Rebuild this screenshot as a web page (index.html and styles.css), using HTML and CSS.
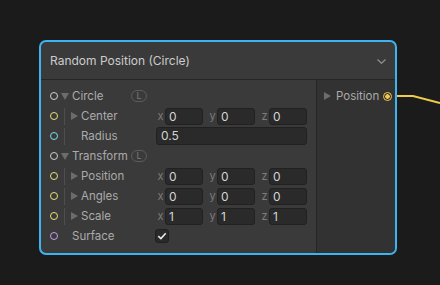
FILE: index.html
```html
<!DOCTYPE html>
<html lang="en">
<head>
  <meta charset="UTF-8">
  <title>Random Position (Circle)</title>
  <link rel="stylesheet" href="styles.css">
</head>
<body>
  <div class="canvas">
    <div class="node">
      <div class="node-header">
        <span class="title">Random Position (Circle)</span>
        <svg class="chevron" width="9" height="5" viewBox="0 0 9 5"><path d="M0.5 0.5 L4.5 4.3 L8.5 0.5" fill="none" stroke="#8a8a8a" stroke-width="1.3"/></svg>
      </div>
      <div class="node-body">
        <div class="inputs">
          <div class="row">
            <span class="port port-white"></span>
            <div class="name">
              <span class="tri-down"></span>
              <span class="label">Circle</span>
              <span class="badge">L</span>
            </div>
          </div>
          <div class="row">
            <span class="port port-yellow"></span>
            <div class="name">
              <span class="guide"></span>
              <span class="tri-right"></span>
              <span class="label">Center</span>
            </div>
            <div class="vec">
              <div class="comp"><span class="axis">x</span><span class="box">0</span></div>
              <div class="comp"><span class="axis">y</span><span class="box">0</span></div>
              <div class="comp"><span class="axis">z</span><span class="box">0</span></div>
            </div>
          </div>
          <div class="row">
            <span class="port port-cyan"></span>
            <div class="name">
              <span class="guide"></span>
              <span class="tri-space"></span>
              <span class="label">Radius</span>
            </div>
            <span class="box box-wide">0.5</span>
          </div>
          <div class="row">
            <span class="port port-white"></span>
            <div class="name">
              <span class="tri-down"></span>
              <span class="label">Transform</span>
              <span class="badge">L</span>
            </div>
          </div>
          <div class="row">
            <span class="port port-yellow"></span>
            <div class="name">
              <span class="guide"></span>
              <span class="tri-right"></span>
              <span class="label">Position</span>
            </div>
            <div class="vec">
              <div class="comp"><span class="axis">x</span><span class="box">0</span></div>
              <div class="comp"><span class="axis">y</span><span class="box">0</span></div>
              <div class="comp"><span class="axis">z</span><span class="box">0</span></div>
            </div>
          </div>
          <div class="row">
            <span class="port port-yellow"></span>
            <div class="name">
              <span class="guide"></span>
              <span class="tri-right"></span>
              <span class="label">Angles</span>
            </div>
            <div class="vec">
              <div class="comp"><span class="axis">x</span><span class="box">0</span></div>
              <div class="comp"><span class="axis">y</span><span class="box">0</span></div>
              <div class="comp"><span class="axis">z</span><span class="box">0</span></div>
            </div>
          </div>
          <div class="row">
            <span class="port port-yellow"></span>
            <div class="name">
              <span class="guide"></span>
              <span class="tri-right"></span>
              <span class="label">Scale</span>
            </div>
            <div class="vec">
              <div class="comp"><span class="axis">x</span><span class="box">1</span></div>
              <div class="comp"><span class="axis">y</span><span class="box">1</span></div>
              <div class="comp"><span class="axis">z</span><span class="box">1</span></div>
            </div>
          </div>
          <div class="row">
            <span class="port port-purple"></span>
            <div class="name">
              <span class="label label-flat">Surface</span>
            </div>
            <span class="checkbox">
              <svg width="14" height="14" viewBox="0 0 14 14"><path d="M3.3 7.2 L5.9 9.6 L10.7 4.3" fill="none" stroke="#e8e8e8" stroke-width="1.6"/></svg>
            </span>
          </div>
        </div>
        <div class="outputs">
          <div class="row out-row">
            <span class="tri-out"></span>
            <span class="out-label">Position</span>
            <span class="port-out"></span>
          </div>
        </div>
      </div>
    </div>
    <!-- edge leaving the output port -->
    <svg class="edge" width="43" height="20" viewBox="0 0 43 20"><path d="M0 6 L16 6 L43 13" fill="none" stroke="#f2c94c" stroke-width="2"/></svg>
  </div>
</body>
</html>
```

FILE: styles.css
```css
body {
  margin: 0;
  background-color: #1b1b1b;
  font-family: 'Inter', 'Noto Sans', sans-serif;
  font-size: 11.5px;
  color: #ababab;
}
.canvas {
  position: relative;
  width: 440px;
  height: 285px;
  padding: 40px 0 0 39px;
  box-sizing: border-box;
  overflow: hidden;
}
.node {
  width: 358px;
  height: 215px;
  box-sizing: border-box;
  border: 2px solid #3db4f2;
  border-radius: 7px;
  background-color: #3a3a3a;
  overflow: hidden;
}
.node-header {
  display: flex;
  align-items: center;
  justify-content: space-between;
  height: 37px;
  padding: 0 9px;
  border-bottom: 1px solid #262626;
}
.title {
  color: #cccccc;
  font-size: 12px;
}
.chevron {
  margin-top: 2px;
}
.node-body {
  display: flex;
  height: 173px;
}
.inputs {
  width: 276px;
  padding-top: 6px;
  border-right: 1px solid #262626;
  box-sizing: border-box;
}
.outputs {
  flex: 1;
  padding-top: 6px;
  background-color: #323232;
}
.row {
  display: flex;
  align-items: center;
  height: 20px;
}
.port {
  width: 8px;
  height: 8px;
  margin-left: 9px;
  box-sizing: border-box;
  border: 1.5px solid #c8c8c8;
  border-radius: 50%;
}
.port-white { border-color: #cfcfcf; }
.port-yellow { border-color: #e9e27a; }
.port-cyan { border-color: #7fdde6; }
.port-purple { border-color: #c29ef0; }
.name {
  display: flex;
  align-items: center;
  width: 98px;
  height: 20px;
}
.tri-down {
  width: 0;
  height: 0;
  margin-left: 3px;
  border-left: 4px solid transparent;
  border-right: 4px solid transparent;
  border-top: 7px solid #6c6c6c;
}
.tri-down + .label {
  margin-left: 3px;
}
.guide {
  width: 1px;
  height: 17px;
  margin-left: 6px;
  background-color: #4e4e4e;
}
.tri-right {
  width: 0;
  height: 0;
  margin-left: 6px;
  border-top: 4.5px solid transparent;
  border-bottom: 4.5px solid transparent;
  border-left: 7px solid #6c6c6c;
}
.tri-space {
  width: 7px;
  margin-left: 6px;
}
.tri-right + .label, .tri-space + .label {
  margin-left: 3px;
}
.label {
  flex: 1;
  white-space: nowrap;
}
.label-flat {
  margin-left: 14px;
}
.badge {
  width: 16px;
  height: 12px;
  margin-right: 9px;
  box-sizing: border-box;
  border: 1px solid #5c5c5c;
  border-radius: 7px;
  color: #7a7a7a;
  font-size: 9px;
  line-height: 10px;
  text-align: center;
}
.vec {
  display: flex;
  align-items: center;
}
.comp {
  display: flex;
  align-items: center;
}
.comp + .comp {
  margin-left: 5px;
}
.axis {
  width: 9px;
  color: #7c7c7c;
  font-size: 11px;
  text-align: center;
}
.box {
  width: 38px;
  height: 17px;
  box-sizing: border-box;
  padding-left: 3px;
  background-color: #2a2a2a;
  border: 1px solid #212121;
  border-radius: 3px;
  color: #d4d4d4;
  font-size: 12px;
  line-height: 15px;
}
.box-wide {
  width: 151px;
  height: 18px;
  padding-left: 4px;
  line-height: 16px;
}
.checkbox {
  display: flex;
  width: 14px;
  height: 14px;
  margin-left: -1px;
  box-sizing: border-box;
  background-color: #2a2a2a;
  border: 1px solid #1f1f1f;
  border-radius: 3px;
  align-items: center;
  justify-content: center;
}
.checkbox svg {
  flex: none;
}
.out-row {
  padding-left: 7px;
}
.tri-out {
  width: 0;
  height: 0;
  border-top: 4.5px solid transparent;
  border-bottom: 4.5px solid transparent;
  border-left: 7px solid #6c6c6c;
}
.out-label {
  margin-left: 5px;
}
.port-out {
  width: 9px;
  height: 9px;
  margin-left: 4px;
  box-sizing: border-box;
  border: 1.5px solid #f2c94c;
  border-radius: 50%;
  background: radial-gradient(circle, #f2c94c 0 2px, transparent 2.5px);
}
.edge {
  position: absolute;
  left: 397px;
  top: 90px;
}
```
